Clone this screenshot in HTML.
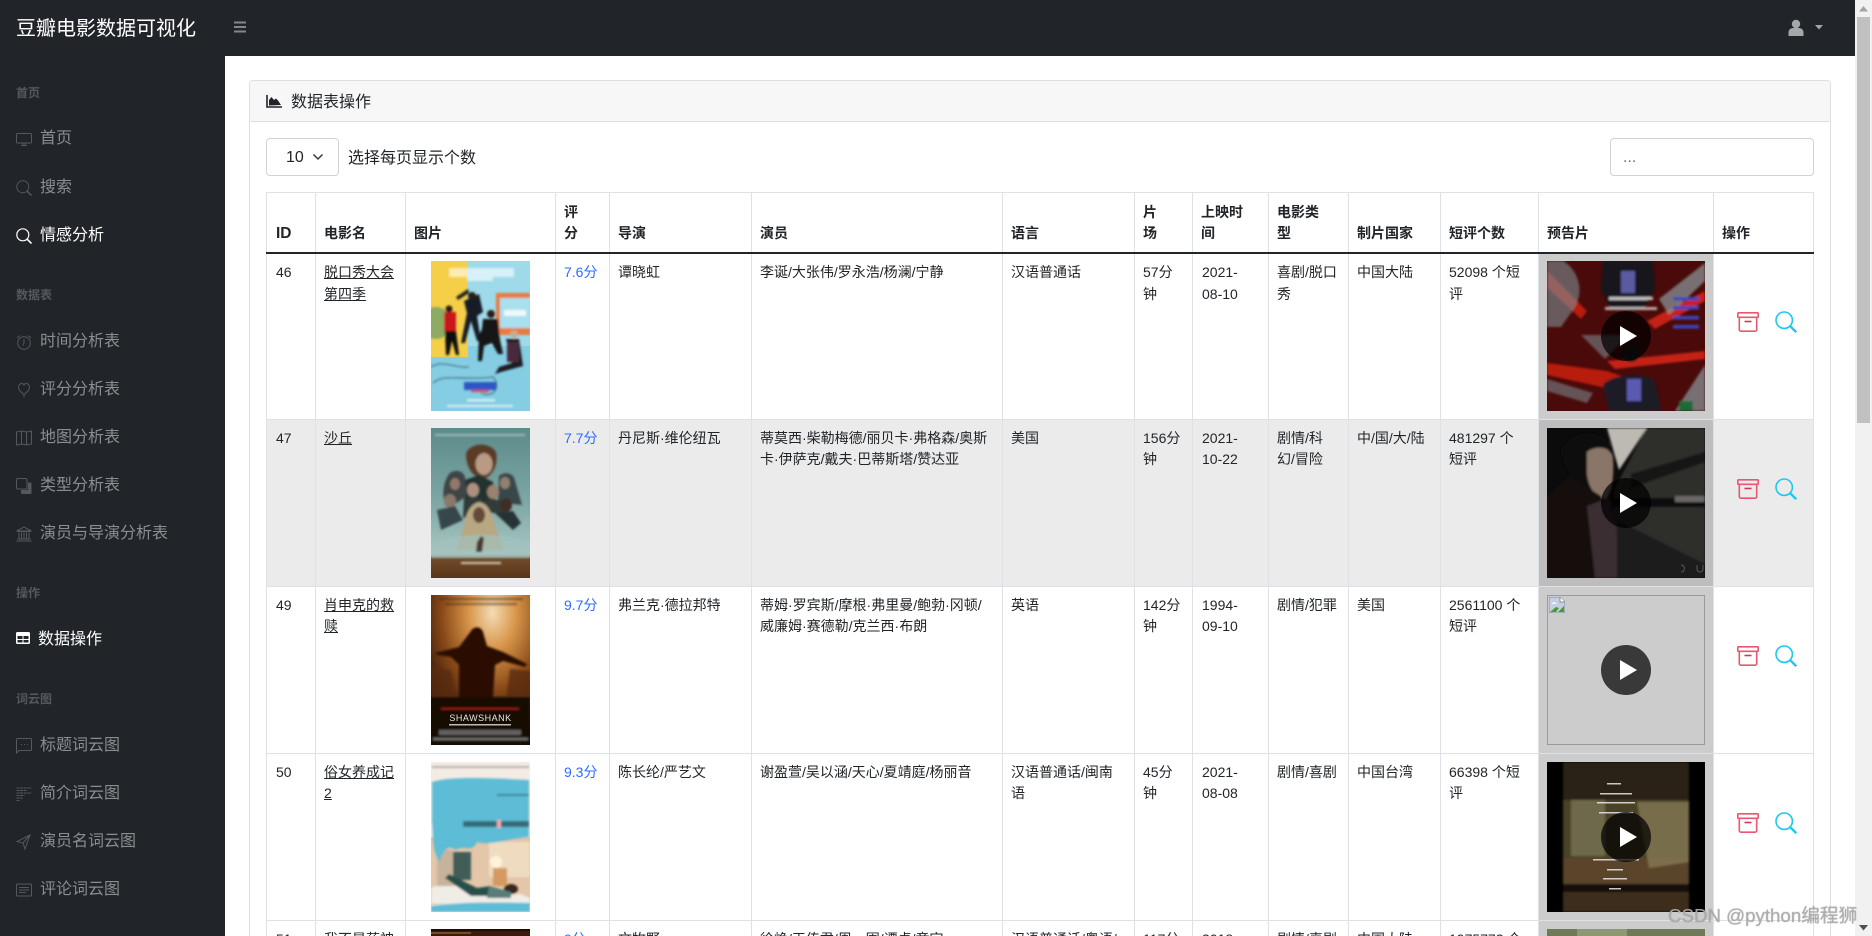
<!DOCTYPE html>
<html lang="zh"><head><meta charset="utf-8"><title>豆瓣电影数据可视化</title>
<style>
*{box-sizing:border-box}
html,body{margin:0;padding:0;width:1872px;height:936px;overflow:hidden;background:#fff}
body{position:relative;font-family:"Liberation Sans","Noto Sans CJK SC",sans-serif;color:#212529;font-size:14px;line-height:21px}
.abs{position:absolute}
#top{left:0;top:0;width:1855px;height:56px;background:#212529}
#side{left:0;top:0;width:225px;height:936px;background:#212529}
.brand{position:absolute;left:16px;top:15px;font-size:20px;line-height:28px;color:#fff;white-space:nowrap}
.h{position:absolute;left:16px;font-size:12px;font-weight:700;line-height:18px;color:#55585c;white-space:nowrap}
.n{position:absolute;left:40px;font-size:16px;line-height:24px;color:#8b8d90;white-space:nowrap;margin-top:1px}
.n.a{color:#fff}
.i{position:absolute;left:16px;width:16px;height:16px;fill:none;stroke:#55585c;stroke-width:1;margin-top:1px}
.i.a{stroke:#fff;stroke-width:1.2}
#card{left:249px;top:80px;width:1582px;height:900px;border:1px solid #dfdfdf;border-radius:4px}
#ch{left:250px;top:81px;width:1580px;height:41px;background:#f7f7f7;border-bottom:1px solid #dfdfdf;border-radius:4px 4px 0 0}
table{position:absolute;left:266px;top:192px;width:1547px;border-collapse:collapse;table-layout:fixed}
th,td{border:1px solid #dee2e6;padding:8px;white-space:nowrap;overflow:hidden;vertical-align:top;text-align:left}
th{vertical-align:bottom;font-weight:700;border-bottom:2px solid #212529;height:60px;padding-bottom:8px}
td{height:167px}
tr.r1 td{padding-top:7px;line-height:22px}
tr.s td{background:#ebebeb}
td.v{background:#ccc}
tr.s td.v{background:#bdbdbd}
td a{color:#212529;text-decoration:underline}
td b{font-weight:400;color:#2f6bff}
.f{padding-left:9px}
th.f{font-size:15.5px}
.d{padding-left:9px}
.p{position:absolute;display:block}
</style></head><body>
<svg width="0" height="0" style="position:absolute"><defs>
<symbol id="arc" viewBox="0 0 22 20"><g fill="none" stroke="#e9566f" stroke-width="1.600"><rect x=".8" y=".8" width="20.400" height="4.500" rx=".8"/><path d="M2.300 5.300V17.600a1.600 1.600 0 0 0 1.600 1.600H18.100a1.600 1.600 0 0 0 1.600-1.600V5.300"/><path d="M7.500 9.500h7" stroke="#d8324f"/></g></symbol>
<symbol id="sr" viewBox="0 0 22 22"><g fill="none" stroke="#1cc8ef"><circle cx="9.200" cy="9.200" r="8.200" stroke-width="1.600"/><path d="M15.200 15.200l6 6" stroke-width="2.400"/></g></symbol>
<symbol id="play" viewBox="0 0 50 50"><circle cx="25" cy="25" r="25" fill="#000" fill-opacity=".72"/><path d="M19 15v20l17-10z" fill="#fff"/></symbol>
<filter id="b1" x="-5%" y="-5%" width="110%" height="110%"><feGaussianBlur stdDeviation="1"/></filter>
<linearGradient id="dg" x1="0" y1="0" x2="0" y2="1"><stop offset="0" stop-color="#5c8b8a"/><stop offset=".5" stop-color="#7ea7a5"/><stop offset=".84" stop-color="#a9c7c3"/><stop offset=".87" stop-color="#6f4b2c"/><stop offset="1" stop-color="#5a3416"/></linearGradient>
<radialGradient id="sg" cx=".62" cy=".12" r=".85"><stop offset="0" stop-color="#f3dcb6"/><stop offset=".28" stop-color="#d8964a"/><stop offset=".6" stop-color="#8a4a18"/><stop offset="1" stop-color="#1c0a04"/></radialGradient>
</defs></svg>

<div class="abs" id="top"></div>
<svg class="abs" style="left:234px;top:21px" width="12" height="12"><path d="M0 1.500h12M0 6h12M0 10.500h12" stroke="#85878a" stroke-width="2"/></svg>
<svg class="abs" style="left:1788px;top:19px" width="16" height="18"><circle cx="8" cy="5" r="4.200" fill="#a5a7a9"/><path d="M.5 17v-3.500C.5 10.500 3 9 5 9h6c2 0 4.500 1.500 4.500 4.500V17z" fill="#a5a7a9"/></svg>
<svg class="abs" style="left:1815px;top:25px" width="8" height="5"><path d="M0 0h8L4 4.500z" fill="#a5a7a9"/></svg>

<div class="abs" id="side">
<div class="brand">豆瓣电影数据可视化</div>
<div class="h" style="top:84px">首页</div>
<svg class="i" style="top:130px" viewBox="0 0 16 16"><rect x=".5" y="2.500" width="15" height="9.500" rx="1"/><path d="M5 14.500h6M7 12v2M9 12v2"/></svg>
<div class="n" style="top:126px">首页</div>
<svg class="i" style="top:179px" viewBox="0 0 16 16"><circle cx="6.800" cy="6.800" r="6"/><path d="M11.300 11.300l4.200 4.200" stroke-width="1.500"/></svg>
<div class="n" style="top:175px">搜索</div>
<svg class="i a" style="top:227px" viewBox="0 0 16 16"><circle cx="6.800" cy="6.800" r="6"/><path d="M11.300 11.300l4.200 4.200" stroke-width="1.600"/></svg>
<div class="n a" style="top:223px">情感分析</div>
<div class="h" style="top:286px">数据表</div>
<svg class="i" style="top:333px" viewBox="0 0 16 16"><circle cx="8" cy="9" r="6.300"/><path d="M8 5v4l-1 2.500M1 4l3-2.500M15 4l-3-2.500"/></svg>
<div class="n" style="top:329px">时间分析表</div>
<svg class="i" style="top:381px" viewBox="0 0 16 16"><path d="M8 12.500C4 9.500 2.500 7.500 2.500 5.200 2.500 3 4 1.500 5.700 1.500 6.800 1.500 7.500 2 8 2.800 8.500 2 9.200 1.500 10.300 1.500 12 1.500 13.500 3 13.500 5.200c0 2.300-1.500 4.300-5.500 7.300zM8 12.500v3"/></svg>
<div class="n" style="top:377px">评分分析表</div>
<svg class="i" style="top:429px" viewBox="0 0 16 16"><path d="M.5 2l5-1 5 1 5-1v13l-5 1-5-1-5 1zM5.500 1v13M10.500 2v13"/></svg>
<div class="n" style="top:425px">地图分析表</div>
<svg class="i" style="top:477px" viewBox="0 0 16 16"><rect x=".5" y=".5" width="10.500" height="10.500" rx="1.500"/><path d="M12 4.500h2.500a1 1 0 0 1 1 1V15a1 1 0 0 1-1 1H6a1 1 0 0 1-1-1v-3h6a1 1 0 0 0 1-1z" fill="#55585c" stroke="none"/></svg>
<div class="n" style="top:473px">类型分析表</div>
<svg class="i" style="top:525px" viewBox="0 0 16 16"><path d="M.5 5L8 1l7.500 4zM1.500 5.500h13M3 6.500v6M5.500 6.500v6M8 6.500v6M10.500 6.500v6M13 6.500v6M1.500 13h13M.5 15h15"/></svg>
<div class="n" style="top:521px">演员与导演分析表</div>
<div class="h" style="top:584px">操作</div>
<svg class="abs" style="left:16px;top:632px" width="14" height="12" viewBox="0 0 14 12"><rect width="14" height="12" rx="1.500" fill="#fff"/><path d="M1.500 4h5v3h-5zM7.500 4h5v3h-5zM1.500 8h5v2.500h-5zM7.500 8h5v2.500h-5z" fill="#212529"/></svg>
<div class="n a" style="left:38px;top:627px">数据操作</div>
<div class="h" style="top:690px">词云图</div>
<svg class="i" style="top:737px" viewBox="0 0 16 16"><path d="M.5 15V1.500a1 1 0 0 1 1-1h13a1 1 0 0 1 1 1v10a1 1 0 0 1-1 1H3zM5 6.500h1M8 6.500h1M11 6.500h1"/></svg>
<div class="n" style="top:733px">标题词云图</div>
<svg class="i" style="top:785px" viewBox="0 0 16 16"><path d="M.5 2h15M.5 4.500h10M.5 7h15M.5 9.500h8M.5 12h6M.5 14.500h3" stroke-dasharray="3 .6"/></svg>
<div class="n" style="top:781px">简介词云图</div>
<svg class="i" style="top:833px" viewBox="0 0 16 16"><path d="M14 1L1 7.500l6 1.500 2 6zM14 1L7 9"/></svg>
<div class="n" style="top:829px">演员名词云图</div>
<svg class="i" style="top:881px" viewBox="0 0 16 16"><rect x=".5" y="2" width="15" height="12" rx="1"/><path d="M3 5.500h10M3 8h10M3 10.500h7"/></svg>
<div class="n" style="top:877px">评论词云图</div>
</div>

<div class="abs" id="card"></div>
<div class="abs" id="ch"></div>
<svg class="abs" style="left:266px;top:95px" width="16" height="13" viewBox="0 0 16 13"><path d="M1 0v12h15" fill="none" stroke="#212529" stroke-width="1.600"/><path d="M3 10.500V5l2.500-3 2.500 3 2-1.500 2 2 3 4.500z" fill="#212529"/></svg>
<div class="abs" style="left:291px;top:91px;font-size:16px;line-height:24px;white-space:nowrap">数据表操作</div>

<div class="abs" style="left:266px;top:138px;width:73px;height:38px;border:1px solid #ced4da;border-radius:4px"></div>
<div class="abs" style="left:286px;top:146px;font-size:16px;line-height:24px">10</div>
<svg class="abs" style="left:312px;top:153px" width="12" height="8"><path d="M1.500 1.500L6 6l4.500-4.500" fill="none" stroke="#343a40" stroke-width="1.500"/></svg>
<div class="abs" style="left:348px;top:147px;font-size:16px;line-height:24px;white-space:nowrap">选择每页显示个数</div>
<div class="abs" style="left:1610px;top:138px;width:204px;height:38px;border:1px solid #ced4da;border-radius:4px"></div>
<div class="abs" style="left:1623px;top:146px;font-size:16px;line-height:24px;color:#6c757d">...</div>

<table>
<colgroup><col style="width:49px"><col style="width:90px"><col style="width:150px"><col style="width:54px"><col style="width:142px"><col style="width:251px"><col style="width:132px"><col style="width:58px"><col style="width:76px"><col style="width:80px"><col style="width:92px"><col style="width:98px"><col style="width:175px"><col style="width:100px"></colgroup>
<tr><th class="f">ID</th><th>电影名</th><th>图片</th><th>评<br>分</th><th>导演</th><th>演员</th><th>语言</th><th>片<br>场</th><th>上映时<br>间</th><th>电影类<br>型</th><th>制片国家</th><th>短评个数</th><th>预告片</th><th>操作</th></tr>
<tr class="r1"><td class="f">46</td><td><a>脱口秀大会<br>第四季</a></td><td></td><td><b>7.6分</b></td><td>谭晓虹</td><td>李诞/大张伟/罗永浩/杨澜/宁静</td><td>汉语普通话</td><td>57分<br>钟</td><td class="d">2021-<br>08-10</td><td>喜剧/脱口<br>秀</td><td>中国大陆</td><td>52098 个短<br>评</td><td class="v"></td><td></td></tr>
<tr class="s"><td class="f">47</td><td><a>沙丘</a></td><td></td><td><b>7.7分</b></td><td>丹尼斯·维伦纽瓦</td><td>蒂莫西·柴勒梅德/丽贝卡·弗格森/奥斯<br>卡·伊萨克/戴夫·巴蒂斯塔/赞达亚</td><td>美国</td><td>156分<br>钟</td><td class="d">2021-<br>10-22</td><td>剧情/科<br>幻/冒险</td><td>中/国/大/陆</td><td>481297 个<br>短评</td><td class="v"></td><td></td></tr>
<tr><td class="f">49</td><td><a>肖申克的救<br>赎</a></td><td></td><td><b>9.7分</b></td><td>弗兰克·德拉邦特</td><td>蒂姆·罗宾斯/摩根·弗里曼/鲍勃·冈顿/<br>威廉姆·赛德勒/克兰西·布朗</td><td>英语</td><td>142分<br>钟</td><td class="d">1994-<br>09-10</td><td>剧情/犯罪</td><td>美国</td><td>2561100 个<br>短评</td><td class="v"></td><td></td></tr>
<tr><td class="f">50</td><td><a>俗女养成记<br>2</a></td><td></td><td><b>9.3分</b></td><td>陈长纶/严艺文</td><td>谢盈萱/吴以涵/天心/夏靖庭/杨丽音</td><td>汉语普通话/闽南<br>语</td><td>45分<br>钟</td><td class="d">2021-<br>08-08</td><td>剧情/喜剧</td><td>中国台湾</td><td>66398 个短<br>评</td><td class="v"></td><td></td></tr>
<tr><td class="f">51</td><td><a>我不是药神</a></td><td></td><td><b>9分</b></td><td>文牧野</td><td>徐峥/王传君/周一围/谭卓/章宇</td><td>汉语普通话/粤语/</td><td>117分</td><td class="d">2018-</td><td>剧情/喜剧</td><td>中国大陆</td><td>1975772 个</td><td class="v"></td><td></td></tr>
</table>

<!-- poster 1 -->
<svg class="p" style="left:431px;top:261px" width="99" height="150" viewBox="0 0 99 150">
<rect width="99" height="150" fill="#9edaea"/><rect width="37" height="96" fill="#f5cf48"/><rect y="85" x="37" width="62" height="65" fill="#84cde3"/><rect y="96" width="37" height="54" fill="#84cde3"/>
<g filter="url(#b1)">
<circle cx="5" cy="62" r="16" fill="#8dab62"/><rect x="65" y="32" width="34" height="42" fill="#ea7a3d"/><rect x="69" y="37" width="30" height="30" fill="#a9e0ee"/>
<rect x="73" y="49" width="22" height="6" fill="#fff" opacity=".8"/>
<rect x="13" y="51" width="12" height="20" fill="#c8161c"/><path d="M14 70h11l3 24h-3l-4-14-3 14h-3z" fill="#111"/><circle cx="18" cy="48" r="3.500" fill="#2a1a14"/>
<path d="M33 40l15-7 4 18-6 4 4 25h-4l-6-20-6 22h-4l6-30z" fill="#151a28"/><circle cx="41" cy="35" r="4" fill="#2a1a14"/><path d="M25 36l12-8 1 4-11 7z" fill="#222"/>
<path d="M52 58h15l2 21 3 14h-5l-6-11-8 3-2 15h-4l1-26 3-6z" fill="#161616"/><circle cx="60" cy="53" r="4" fill="#2b1d17"/>
<path d="M75 78h13l4 27-22 6-6 2 4-7 13-4z" fill="#1b1b22"/><rect x="76" y="81" width="12" height="20" fill="#4a2a3a"/><circle cx="83" cy="73" r="4" fill="#c9a98f"/>
<path d="M0 106c12-8 26 2 38 0M2 122c10-10 30-2 60-6 8 8 2 22-12 16" fill="none" stroke="#2b4a56" stroke-width=".8"/>
<rect x="33" y="121" width="32" height="8" fill="#2d56c5"/><rect x="40" y="129" width="18" height="2" fill="#e0464a"/>
<rect x="36" y="138" width="28" height="2.500" fill="#e8f4f8" opacity=".8"/><rect x="16" y="144" width="66" height="2" fill="#eef7fa" opacity=".8"/>
<rect x="18" y="7" width="65" height="9" fill="#fff" opacity=".6"/><rect x="36" y="16" width="26" height="4" fill="#fff" opacity=".6"/>
</g></svg>
<!-- poster 2 -->
<svg class="p" style="left:431px;top:428px" width="99" height="150" viewBox="0 0 99 150">
<rect width="99" height="150" fill="url(#dg)"/>
<g filter="url(#b1)">
<rect x="4" y="6" width="90" height="2" fill="#c4d5d1" opacity=".6"/>
<path d="M35 26c2-10 22-14 30-2 2 10-1 22-12 27l-10-4c-6-6-8-14-8-21z" fill="#5a3a28"/><ellipse cx="53" cy="36" rx="8.500" ry="11" fill="#b99a84"/>
<path d="M34 52l14-5 14 7 3 22-32 2z" fill="#24302f"/>
<path d="M18 46c5-5 14-4 16 3l2 19-18 12c-8-6-7-24 0-34z" fill="#3e4446"/><ellipse cx="24" cy="56" rx="5" ry="6" fill="#93786a"/>
<path d="M68 48c6-5 15-3 16 5l7 24-24-3z" fill="#38464a"/><ellipse cx="74" cy="55" rx="5" ry="6" fill="#93806f"/>
<ellipse cx="42" cy="62" rx="6" ry="7" fill="#ad907f"/><path d="M33 70h18l2 14-21 6z" fill="#2d3a38"/>
<ellipse cx="62" cy="64" rx="6" ry="7" fill="#9a8170"/><path d="M54 72h16l4 14-22-2z" fill="#303b39"/>
<ellipse cx="19" cy="73" rx="6" ry="7" fill="#8a7867"/><path d="M6 82l18-4 8 14-22 10z" fill="#364648"/>
<ellipse cx="75" cy="77" rx="6" ry="7" fill="#3f2e27"/><path d="M64 85l18-2 8 12-8 7z" fill="#263234"/>
<path d="M32 100c3-15 7-24 16-26 9 1 13 11 17 26l8 22H25z" fill="#b8a783"/><ellipse cx="48" cy="87" rx="6" ry="8" fill="#664838"/>
<path d="M0 118c20-14 78-16 99 0v12H0z" fill="#a2c2be" opacity=".7"/>
<path d="M46 114l4-6 3 2-2 14h-6z" fill="#4a3a32"/>
<rect x="30" y="134" width="40" height="2" fill="#e7dcc9" opacity=".9"/>
</g></svg>
<!-- poster 3 -->
<svg class="p" style="left:431px;top:595px" width="99" height="150" viewBox="0 0 99 150">
<rect width="99" height="150" fill="url(#sg)"/>
<g filter="url(#b1)">
<rect x="8" y="3" width="84" height="2" fill="#3a2510" opacity=".6"/><rect x="14" y="8" width="72" height="2" fill="#3a2510" opacity=".5"/>
<path d="M4 58l24-6 12-16c3-5 10-5 12 1l4 14 16 6 24 12-2 3-22-6-8 4-2 32-34 0 0-32-8-8-14-2z" fill="#2a1106"/>
<path d="M0 70l20 6 6 30H0zM99 76l-20-2-4 32h24z" fill="#5a2c0e" opacity=".8"/>
<rect y="102" width="99" height="48" fill="#120705"/>
<rect x="10" y="113" width="78" height="1.600" fill="#a31c1c"/>
<rect x="8" y="135" width="82" height="5" fill="#888" opacity=".7"/><rect x="2" y="143" width="95" height="2" fill="#777"/>
</g>
<text x="49.500" y="126" font-size="9" text-anchor="middle" fill="#e6e6e6" font-family="Liberation Sans" letter-spacing=".5">SHAWSHANK</text>
<rect x="18" y="129" width="62" height="1.500" fill="#bbb"/>
</svg>
<!-- poster 4 -->
<svg class="p" style="left:431px;top:762px" width="99" height="150" viewBox="0 0 99 150">
<rect width="99" height="150" fill="#f4ebe4"/>
<rect y="75" width="99" height="68" fill="#e4c6a8"/>
<g filter="url(#b1)">
<rect x="1" y="4" width="97" height="2" fill="#8c8a88" opacity=".6"/>
<rect x="58" y="80" width="41" height="35" fill="#efdcc0"/>
<rect x="20" y="90" width="20" height="28" fill="#3f5d58"/>
<rect x="6" y="88" width="16" height="36" fill="#c7b39c"/>
<circle cx="65" cy="100" r="6" fill="#fff3dc"/><rect x="62" y="106" width="14" height="18" fill="#d59a62"/>
<path d="M1 20C20 14 60 16 98 18V75C70 78 60 84 46 80 40 92 36 82 24 88 16 80 10 94 9 100 0 88 3 74 1 60z" fill="#5dbcd6"/>
<path d="M0 126l4-2h24l16 8 26 2 20-2 9 4v6H0z" fill="#f0ece6"/>
<path d="M18 112l28 14 14-2-2 10-18 0-26-18z" fill="#26504a"/><ellipse cx="80" cy="127" rx="7" ry="5" fill="#352620"/><path d="M58 124l22 6v6H56z" fill="#577d7a"/>
<path d="M0 144c30-4 60-4 99-3v9H0z" fill="#5dbcd6"/>
<rect x="32" y="59" width="66" height="6" fill="#22343a" opacity=".6"/><rect x="66" y="32" width="32" height="2" fill="#2e5c6a" opacity=".6"/>
<rect x="66" y="58" width="4" height="8" fill="#f4a9b0"/>
</g></svg>
<!-- poster 5 -->
<svg class="p" style="left:431px;top:929px" width="99" height="7"><rect width="99" height="7" fill="#3a1c0c"/><rect width="99" height="2" fill="#1e0c06"/><rect x="0" y="3" width="40" height="2" fill="#7a4a20"/></svg>

<!-- video 1 -->
<svg class="p" style="left:1547px;top:261px" width="158" height="150" viewBox="0 0 158 150">
<rect width="158" height="150" fill="#4a0a0a"/>
<g filter="url(#b1)">
<path d="M0 10l40 40-6 8L0 26zM0 102l60 8 40 14-18 8-82-18z" fill="#b81d10"/>
<path d="M100 60l58-30v10l-50 28zM60 100l98-10v8l-90 10z" fill="#c52412"/>
<path d="M0 0h16c14 8 22 28 12 46L14 66H0z" fill="#7f9094" opacity=".6"/>
<path d="M112 38l46-36v18l-36 34zM128 150l30-46v46z" fill="#8a9a9c" opacity=".7"/>
<path d="M0 118l46 14-6 10L0 130zM34 74h48l-24 24z" fill="#78848a" opacity=".6"/>
<path d="M56 0h50l2 28-12 20H64L54 28z" fill="#17161a"/>
<rect x="74" y="10" width="14" height="22" fill="#5a5aa0"/>
<rect x="62" y="36" width="44" height="3" fill="#eee" opacity=".8"/><rect x="58" y="46" width="52" height="3" fill="#eee" opacity=".7"/>
<rect x="126" y="36" width="26" height="3.500" fill="#3a45c0"/><rect x="126" y="45" width="26" height="3.500" fill="#3a45c0"/><rect x="126" y="55" width="26" height="3.500" fill="#3a45c0"/><rect x="126" y="64" width="26" height="3.500" fill="#3a45c0"/>
<path d="M62 150l-6-26c6-10 40-14 52-4l6 30z" fill="#1d1c26"/><circle cx="84" cy="92" r="9" fill="#211a1a"/>
<rect x="80" y="118" width="14" height="22" fill="#5a5ab0"/>
<rect x="132" y="140" width="14" height="10" fill="#1d6a35"/>
</g></svg>
<!-- video 2 -->
<svg class="p" style="left:1547px;top:428px" width="158" height="150" viewBox="0 0 158 150">
<rect width="158" height="150" fill="#0c0b0b"/>
<g filter="url(#b1)">
<path d="M60 0h40L72 42z" fill="#bdbab3"/>
<path d="M68 60L100 0h58v150H60z" fill="#2f2d2a"/>
<path d="M84 46L158 24v10L84 60z" fill="#141312"/>
<path d="M62 70h96v9H62z" fill="#0a0a0a"/><rect x="128" y="68" width="30" height="6" fill="#6a6866"/>
<path d="M70 92l88 44v14H70z" fill="#1d1c1a"/>
<path d="M14 22C22 2 54 0 62 16c0 14 0 36-6 50L40 66C28 56 16 40 14 22z" fill="#0c0a0a"/>
<path d="M40 24c10-8 26-4 26 6 1 14 0 32-6 40-6 4-18-6-20-24z" fill="#8a7668"/>
<path d="M0 68l22-20 32 20 8 30 0 52H0z" fill="#140c0e"/>
<path d="M40 78l22-8 8 38 0 42H48z" fill="#3a2e30"/>
</g>
<path d="M134 144a3 3 0 0 0 0-7M150 137v4a3 3 0 0 0 6 0v-4" fill="none" stroke="#5a5855" stroke-width="1"/>
</svg>
<!-- video 3: broken image -->
<div class="abs" style="left:1547px;top:595px;width:158px;height:150px;border:1px solid #9a9a9a"></div>
<svg class="p" style="left:1549px;top:597px" width="16" height="16" viewBox="0 0 16 16"><path d="M0 0h11l5 5v11H0z" fill="#c4cfe6"/><path d="M0 0h11l5 5v11H0z" fill="none" stroke="#8c8c8c"/><path d="M11 0v5h5" fill="#fff" stroke="#8c8c8c"/><path d="M1 15l6-5 3 1-3 4z" fill="#4a9a32"/><path d="M9 15l6-6v6z" fill="#4a9a32"/><path d="M2 7l3-2 3 2z" fill="#fff"/></svg>
<!-- video 4 -->
<svg class="p" style="left:1547px;top:762px" width="158" height="150" viewBox="0 0 158 150">
<rect width="158" height="150" fill="#000"/>
<g filter="url(#b1)">
<rect x="16" width="126" height="38" fill="#2b2413"/>
<rect x="16" y="38" width="126" height="58" fill="#4a4228"/>
<rect x="16" y="96" width="126" height="42" fill="#5a4529"/>
<rect x="16" y="130" width="126" height="20" fill="#3c2f1d"/>
<path d="M90 40h52v60l-40 6z" fill="#978a62" opacity=".6"/>
<path d="M24 38h34v56H24z" fill="#8d8a68" opacity=".55"/>
<rect x="16" y="122" width="126" height="8" fill="#14110b"/>
</g>
<g fill="#e6e6e6" opacity=".85"><rect x="60" y="21" width="14" height="1.500"/><rect x="53" y="31" width="32" height="1.500"/><rect x="50" y="40" width="38" height="1.500"/><rect x="52" y="50" width="34" height="1.500"/><rect x="46" y="97" width="46" height="1.500"/><rect x="60" y="107" width="16" height="1.500"/><rect x="56" y="116" width="24" height="1.500"/><rect x="62" y="126" width="12" height="1.500"/></g>
</svg>
<!-- video 5 -->
<svg class="p" style="left:1547px;top:929px" width="158" height="7"><rect width="158" height="7" fill="#6f7a58"/><rect x="30" width="50" height="7" fill="#8d9874"/></svg>

<svg class="p" width="50" height="50" style="left:1601px;top:311px"><use href="#play"/></svg>
<svg class="p" width="50" height="50" style="left:1601px;top:478px"><use href="#play"/></svg>
<svg class="p" width="50" height="50" style="left:1601px;top:645px"><use href="#play"/></svg>
<svg class="p" width="50" height="50" style="left:1601px;top:812px"><use href="#play"/></svg>

<svg class="p" width="22" height="20" style="left:1737px;top:312px"><use href="#arc"/></svg>
<svg class="p" width="22" height="22" style="left:1775px;top:311px"><use href="#sr"/></svg>
<svg class="p" width="22" height="20" style="left:1737px;top:479px"><use href="#arc"/></svg>
<svg class="p" width="22" height="22" style="left:1775px;top:478px"><use href="#sr"/></svg>
<svg class="p" width="22" height="20" style="left:1737px;top:646px"><use href="#arc"/></svg>
<svg class="p" width="22" height="22" style="left:1775px;top:645px"><use href="#sr"/></svg>
<svg class="p" width="22" height="20" style="left:1737px;top:813px"><use href="#arc"/></svg>
<svg class="p" width="22" height="22" style="left:1775px;top:812px"><use href="#sr"/></svg>

<!-- scrollbar -->
<div class="abs" style="left:1855px;top:0;width:17px;height:936px;background:#f1f1f1"></div>
<div class="abs" style="left:1857px;top:17px;width:13px;height:406px;background:#c1c1c1"></div>
<svg class="abs" style="left:1859px;top:6px" width="9" height="6"><path d="M0 5.500L4.500 0 9 5.500z" fill="#a3a3a3"/></svg>
<svg class="abs" style="left:1859px;top:925px" width="9" height="6"><path d="M0 0L4.500 5.500 9 0z" fill="#505050"/></svg>

<div class="abs" style="left:1668px;top:903px;font-size:18.700px;line-height:26px;white-space:nowrap;color:rgba(175,175,175,.9);text-shadow:0 0 1px rgba(80,80,80,.6)">CSDN @python编程狮</div>
</body></html>
